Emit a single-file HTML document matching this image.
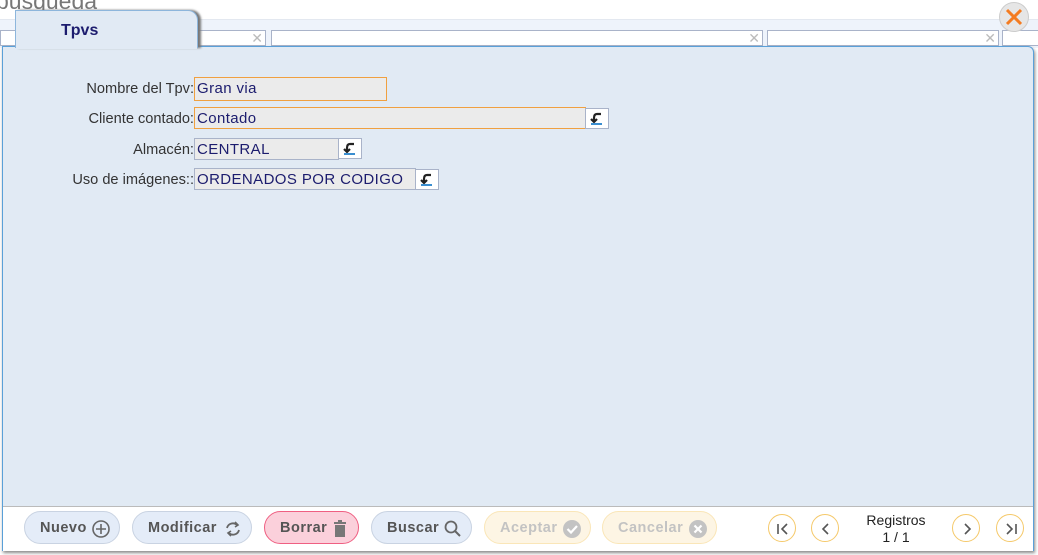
<!DOCTYPE html>
<html><head><style>
body{margin:0;width:1038px;height:555px;overflow:hidden;background:#fff;font-family:"Liberation Sans",sans-serif;position:relative}
.a{position:absolute}
.inp{position:absolute;top:30px;height:16px;background:#fff;border:1px solid #a9b3c9;box-sizing:border-box}
.x{position:absolute;right:2px;top:-1px;color:#bbb;font-size:14px}
.lbl{position:absolute;right:844px;font-size:14.6px;color:#333;text-align:right;white-space:nowrap}
.f{position:absolute;left:194px;background:#ebebeb;border:1px solid #a9b3c9;box-sizing:border-box;font-size:15px;color:#1c1c6e;padding-left:2px;line-height:22px;letter-spacing:.4px}
.f.o{border-color:#f0a040}
.lk{position:absolute;width:24px;height:21px;background:#fff;border:1px solid #a9b3c9;box-sizing:border-box}
.btn{position:absolute;top:511px;height:33px;border-radius:17px;box-sizing:border-box;border:1px solid #c9d3e2;background:#e4ecf8;font-size:14.5px;font-weight:bold;color:#555;line-height:32px;padding-left:15px;letter-spacing:.5px}
.btn svg{position:absolute;right:8px;top:7px}
.nav{position:absolute;top:514px;width:28px;height:28px;border:1px solid #f5c96a;border-radius:50%;box-sizing:border-box;background:#fff}
.nav svg{position:absolute;left:6px;top:6px}
</style></head><body>
<div class="a" style="left:-4px;top:-12px;font-size:23px;color:#777">busqueda</div>
<div class="a" style="left:0;top:19px;width:1038px;height:28px;background:#eef3fb;border-top:1px solid #e3e8f0"></div>
<div class="inp" style="left:0;width:266px"><span class="x">✕</span></div>
<div class="inp" style="left:271px;width:492px"><span class="x">✕</span></div>
<div class="inp" style="left:767px;width:232px"><span class="x">✕</span></div>
<div class="inp" style="left:1002px;width:40px"></div>
<div class="a" style="left:999px;top:2px;width:30px;height:30px;border-radius:50%;background:#e6e6e6;border:1px solid #ccc;box-sizing:border-box"><svg width="28" height="28" style="position:absolute;left:0;top:0"><path d="M7 7L21 21M21 7L7 21" stroke="#f47b20" stroke-width="3"/></svg></div>
<div class="a" style="left:2px;top:46px;width:1032px;height:505px;background:#e1eaf4;border:1px solid #5aa0d8;border-radius:0 6px 0 0;box-sizing:border-box;box-shadow:1px 2px 3px #888"></div>
<div class="a" style="left:15px;top:10px;width:183px;height:38px;background:#e1eaf4;border:1px solid #8db6dc;border-bottom:none;border-radius:0 10px 0 0;box-sizing:border-box;box-shadow:3px 0 2px #777;font-weight:bold;font-size:16px;color:#1c1c6e;padding:11px 0 0 45px">Tpvs</div>
<div class="a" style="left:16px;top:46px;width:181px;height:3px;background:#e1eaf4"></div>
<div class="lbl" style="top:81px">Nombre del Tpv:</div>
<div class="f o" style="top:77px;width:193px;height:24px">Gran via</div>
<div class="lbl" style="top:111px">Cliente contado:</div>
<div class="f o" style="top:107px;width:392px;height:22px">Contado</div>
<div class="lk" style="left:585px;top:108px"><svg width="22" height="19"><path d="M15 5 L11 5 Q8 5 8 9 L8 13 M5 10 L8 13 L11 10" stroke="#222" stroke-width="2.2" fill="none"/><path d="M5 15H16" stroke="#3a8ed0" stroke-width="2"/></svg></div>
<div class="lbl" style="top:142px">Almacén:</div>
<div class="f" style="top:138px;width:145px;height:22px">CENTRAL</div>
<div class="lk" style="left:338px;top:138px"><svg width="22" height="19"><path d="M15 5 L11 5 Q8 5 8 9 L8 13 M5 10 L8 13 L11 10" stroke="#222" stroke-width="2.2" fill="none"/><path d="M5 15H16" stroke="#3a8ed0" stroke-width="2"/></svg></div>
<div class="lbl" style="top:172px">Uso de imágenes::</div>
<div class="f" style="top:168px;width:222px;height:22px">ORDENADOS POR CODIGO</div>
<div class="lk" style="left:415px;top:169px"><svg width="22" height="19"><path d="M15 5 L11 5 Q8 5 8 9 L8 13 M5 10 L8 13 L11 10" stroke="#222" stroke-width="2.2" fill="none"/><path d="M5 15H16" stroke="#3a8ed0" stroke-width="2"/></svg></div>
<div class="a" style="left:3px;top:506px;width:1030px;height:44px;background:#fff;border-top:1px solid #bbb"></div>
<div class="btn" style="left:24px;width:96px">Nuevo<svg width="20" height="20"><circle cx="10" cy="10" r="8" stroke="#666" stroke-width="1.6" fill="none"/><path d="M10 5V15M5 10H15" stroke="#666" stroke-width="1.6"/></svg></div>
<div class="btn" style="left:132px;width:120px">Modificar<svg width="20" height="20"><path d="M14 6A6 6 0 0 0 4 9M6 14A6 6 0 0 0 16 11" stroke="#666" stroke-width="1.8" fill="none"/><path d="M12 3L15 6L12 8M8 17L5 14L8 12" stroke="#666" stroke-width="1.6" fill="none"/></svg></div>
<div class="btn" style="left:264px;width:95px;background:#fbd0db;border-color:#ef5f82">Borrar<svg width="20" height="20"><path d="M4 4H16M8 2H12" stroke="#777" stroke-width="2"/><rect x="5" y="6" width="10" height="12" fill="#777"/></svg></div>
<div class="btn" style="left:371px;width:101px">Buscar<svg width="20" height="20"><circle cx="8" cy="8" r="5.5" stroke="#666" stroke-width="1.8" fill="none"/><path d="M12 12L17 17" stroke="#666" stroke-width="2"/></svg></div>
<div class="btn" style="left:484px;width:107px;background:#fdf5e4;border-color:#fae6b8;color:#c3c3c3">Aceptar<svg width="20" height="20"><circle cx="10" cy="10" r="9" fill="#c3c3c3"/><path d="M5.5 10L9 13.5L15 7" stroke="#fff" stroke-width="2.2" fill="none"/></svg></div>
<div class="btn" style="left:602px;width:115px;background:#fdf5e4;border-color:#fae6b8;color:#c3c3c3">Cancelar<svg width="20" height="20"><circle cx="10" cy="10" r="9" fill="#c3c3c3"/><path d="M6.5 6.5L13.5 13.5M13.5 6.5L6.5 13.5" stroke="#fff" stroke-width="2.2"/></svg></div>
<div class="nav" style="left:768px"><svg width="16" height="16"><path d="M3 3V13M12 3L7 8L12 13" stroke="#555" stroke-width="1.6" fill="none"/></svg></div>
<div class="nav" style="left:811px"><svg width="16" height="16"><path d="M10 3L5 8L10 13" stroke="#555" stroke-width="1.6" fill="none"/></svg></div>
<div class="a" style="left:846px;top:512px;width:100px;text-align:center;font-size:14px;color:#222;line-height:17px">Registros<br>1 / 1</div>
<div class="nav" style="left:952px"><svg width="16" height="16"><path d="M6 3L11 8L6 13" stroke="#555" stroke-width="1.6" fill="none"/></svg></div>
<div class="nav" style="left:996px"><svg width="16" height="16"><path d="M13 3V13M4 3L9 8L4 13" stroke="#555" stroke-width="1.6" fill="none"/></svg></div>
</body></html>
